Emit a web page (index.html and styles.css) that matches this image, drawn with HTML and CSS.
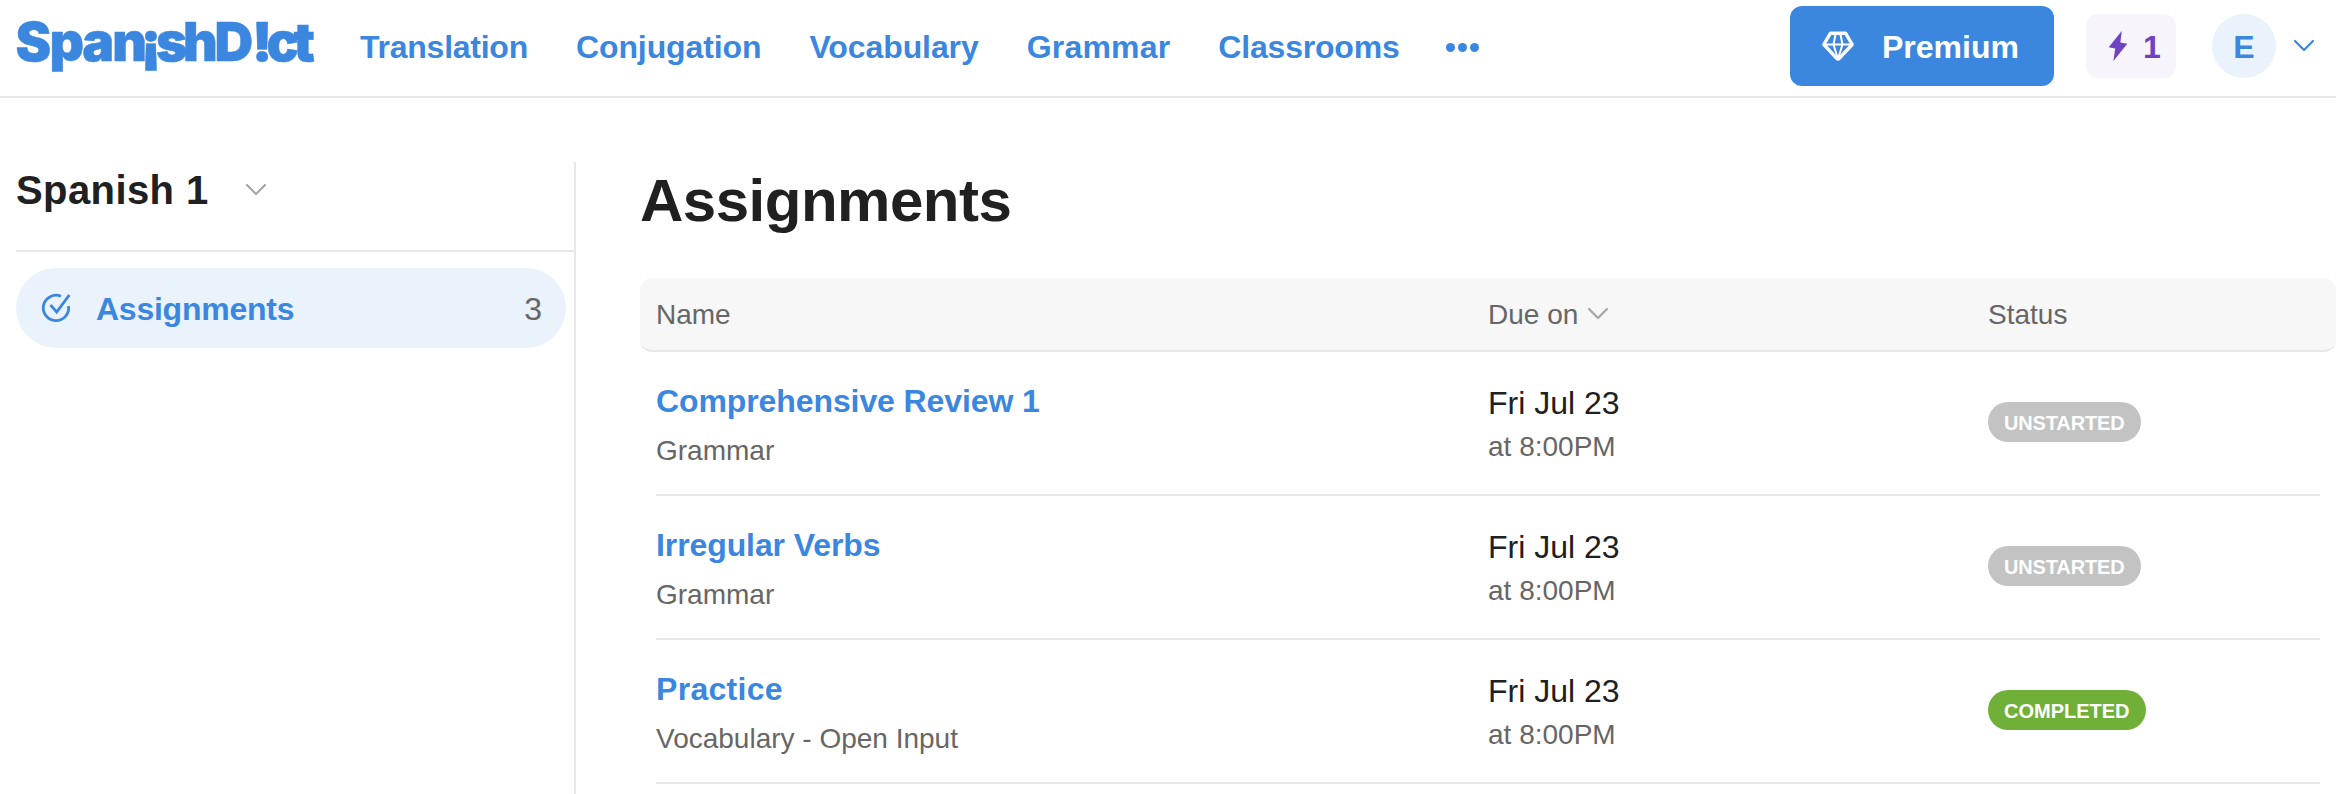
FILE: index.html
```html
<!DOCTYPE html>
<html lang="en">

<head>
    <meta charset="UTF-8" />
    <meta name="viewport" content="width=device-width, initial-scale=1.0" />
    <title>Assignments | SpanishDict</title>
    <link rel="stylesheet" href="styles.css">
</head>

<body>
    <header class="header">
        <a class="logo" href="#">
            <svg width="304" height="64" viewBox="0 0 304 64">
                <text y="47" x="-0.6 33.5 66.3 96.2 124.800 140 167 198.5 236 250.500 277.5">Span¡shD!ct</text>
            </svg>
        </a>
        <nav class="nav">
            <a class="translation" href="#">Translation</a>
            <a href="#">Conjugation</a>
            <a href="#">Vocabulary</a>
            <a class="grammar" href="#">Grammar</a>
            <a class="classrooms" href="#">Classrooms</a>
            <a class="more" href="#"><i></i><i></i><i></i></a>
        </nav>
        <div class="actions">
            <a class="premium" href="#">
                <svg width="32" height="30" viewBox="0 0 32 30" fill="none" stroke="#fff" stroke-linejoin="round">
                    <path d="M8.500 2.200h15L30.200 13.500 17.300 27.300q-1.300 1.300-2.600 0L1.800 13.500z" stroke-width="3.400" />
                    <path d="M2 13.500h28M13.800 2l-2.300 11.500L16 28l4.500-14.500L18.200 2" stroke-width="2" />
                </svg>
                <span>Premium</span>
            </a>
            <div class="streak">
                <svg width="20" height="32" viewBox="0 0 20 32">
                    <path d="M13.700 1L.7 17.200l6.500 1.300-1.800 12.500L19.300 13.800l-6.900-1.300z" fill="#6f42c1" />
                </svg>
                <span>1</span>
            </div>
            <div class="avatar">E</div>
            <svg class="chevron" width="20" height="12" viewBox="0 0 20 12">
                <path d="M1 1l9 9 9-9" />
            </svg>
        </div>
    </header>

    <main class="page">
        <aside class="sidebar">
            <div class="class-select">
                <h2>Spanish 1</h2>
                <svg class="chevron gray" width="20" height="12" viewBox="0 0 20 12">
                    <path d="M1 1l9 9 9-9" />
                </svg>
            </div>
            <a class="side-link" href="#">
                <svg width="30" height="30" viewBox="0 0 30 30" fill="none" stroke="#3b87df" stroke-width="2.8">
                    <path d="M20 3.300A12.700 12.700 0 1 0 27.500 13" />
                    <path d="M9.500 12l6.200 7L28.300 2" />
                </svg>
                <span class="label">Assignments</span>
                <span class="count">3</span>
            </a>
        </aside>

        <section class="content">
            <h1>Assignments</h1>
            <div class="table-head">
                <div>Name</div>
                <div class="sort">Due on
                    <svg class="chevron gray" width="20" height="12" viewBox="0 0 20 12">
                        <path d="M1 1l9 9 9-9" />
                    </svg>
                </div>
                <div>Status</div>
            </div>

            <div class="row">
                <div class="info">
                    <a class="name" href="#">Comprehensive Review 1</a>
                    <p class="type">Grammar</p>
                </div>
                <div class="due">
                    <p class="date">Fri Jul 23</p>
                    <p class="time">at 8:00PM</p>
                </div>
                <div><span class="badge">UNSTARTED</span></div>
            </div>
            <div class="row">
                <div class="info">
                    <a class="name" href="#">Irregular Verbs</a>
                    <p class="type">Grammar</p>
                </div>
                <div class="due">
                    <p class="date">Fri Jul 23</p>
                    <p class="time">at 8:00PM</p>
                </div>
                <div><span class="badge">UNSTARTED</span></div>
            </div>
            <div class="row">
                <div class="info">
                    <a class="name practice" href="#">Practice</a>
                    <p class="type">Vocabulary - Open Input</p>
                </div>
                <div class="due">
                    <p class="date">Fri Jul 23</p>
                    <p class="time">at 8:00PM</p>
                </div>
                <div><span class="badge completed">COMPLETED</span></div>
            </div>
        </section>
    </main>
</body>

</html>
```
FILE: styles.css
```css
* {
    margin: 0;
    padding: 0;
    box-sizing: border-box;
}

body {
    font-family: "Helvetica Neue", "Liberation Sans", Arial, sans-serif;
    font-size: 32px;
    line-height: 40px;
    color: #202020;
    background-color: #fff;
    height: 794px;
    overflow: hidden;
}

a {
    color: #3b87df;
    font-weight: bold;
    text-decoration: none;
}

svg {
    display: block;
    flex-shrink: 0;
    overflow: visible;
}

.chevron {
    fill: none;
    stroke: #3b87df;
    stroke-width: 2.2;
    stroke-linecap: round;
    stroke-linejoin: round;
}

.chevron.gray {
    stroke: #a6a6a6;
}

/* Header */
.header {
    display: flex;
    height: 98px;
    padding: 0 22px 4px 16px;
    align-items: center;
    border-bottom: 2px solid #e8e8e8;
}

.logo {
    width: 304px;
    margin-right: 40px;
}

.logo text {
    font-family: Inter, "Liberation Sans", sans-serif;
    font-size: 53.5px;
    font-weight: 900;
    fill: #3b87df;
    stroke: #3b87df;
    stroke-width: 0.5px;
}

.nav {
    display: flex;
    align-items: center;
    gap: 48px;
    padding-top: 2px;
    letter-spacing: -0.1px;
}

.nav .translation {
    letter-spacing: -0.25px;
}

.nav .grammar {
    letter-spacing: 0.2px;
}

.nav .classrooms {
    letter-spacing: -0.2px;
}

.more {
    display: flex;
    gap: 3px;
    margin-left: -2px;
}

.more i {
    width: 9px;
    height: 9px;
    border-radius: 50%;
    background-color: #3b87df;
}

.actions {
    display: flex;
    align-items: center;
    margin-left: auto;
}

.premium {
    display: flex;
    align-items: center;
    gap: 28px;
    width: 264px;
    height: 80px;
    padding-left: 32px;
    color: #fff;
    background-color: #3b87df;
    border-radius: 12px;
}

.premium span,
.streak span {
    padding-top: 2px;
}

.streak {
    display: flex;
    align-items: center;
    gap: 15px;
    width: 90px;
    height: 64px;
    margin: 0 36px 0 32px;
    padding-left: 22px;
    color: #6f42c1;
    font-weight: bold;
    background-color: #f7f4fc;
    border-radius: 12px;
}

.avatar {
    width: 64px;
    height: 64px;
    margin-right: 18px;
    line-height: 66px;
    text-align: center;
    color: #3b87df;
    font-weight: bold;
    background-color: #eaf2fc;
    border-radius: 50%;
}

/* Layout */
.page {
    display: flex;
    padding: 64px 0 0 16px;
}

.sidebar {
    width: 560px;
    height: 640px;
    border-right: 2px solid #e8e8e8;
}

.class-select {
    display: flex;
    align-items: center;
    height: 90px;
    padding-bottom: 32px;
    border-bottom: 2px solid #e8e8e8;
}

.class-select h2 {
    width: 230px;
    font-size: 40px;
    letter-spacing: 0.4px;
}

.side-link {
    display: flex;
    align-items: center;
    height: 80px;
    margin: 16px 8px 0 0;
    padding: 0 24px 0 25px;
    background-color: #eaf2fc;
    border-radius: 40px;
}

.side-link .label {
    flex: 1;
    margin-left: 25px;
    padding-top: 2px;
    letter-spacing: -0.25px;
}

.side-link .count {
    padding-top: 2px;
    color: #666;
    font-weight: normal;
}

.content {
    flex: 1;
    margin-left: 64px;
}

.content h1 {
    height: 116px;
    font-size: 60px;
    line-height: 78px;
    letter-spacing: -0.5px;
}

/* Assignments table */
.table-head,
.row {
    display: grid;
    grid-template-columns: 832px 500px 1fr;
}

.table-head {
    height: 74px;
    padding: 0 16px;
    font-size: 28px;
    line-height: 74px;
    color: #666;
    background-color: #f7f7f7;
    border-bottom: 2px solid #e8e8e8;
    border-radius: 12px;
}

.sort {
    display: flex;
    align-items: center;
    gap: 10px;
}

.sort .chevron {
    margin-bottom: 2px;
}

.row {
    height: 144px;
    margin: 0 16px;
    align-items: center;
    border-bottom: 2px solid #e8e8e8;
}

.info {
    padding-top: 6px;
}

.name {
    display: block;
    margin-bottom: 10px;
    letter-spacing: -0.1px;
}

.name.practice {
    letter-spacing: 0.3px;
}

.type,
.time {
    font-size: 28px;
    color: #666;
}

.due {
    padding-top: 4px;
}

.date {
    margin-bottom: 4px;
}

.badge {
    display: block;
    width: fit-content;
    height: 40px;
    margin-bottom: 2px;
    padding: 2px 16px 0;
    font-size: 20px;
    font-weight: bold;
    line-height: 38px;
    letter-spacing: -0.15px;
    color: #fff;
    background-color: #c3c3c3;
    border-radius: 20px;
}

.badge.completed {
    letter-spacing: 0;
    background-color: #70b038;
}
```
